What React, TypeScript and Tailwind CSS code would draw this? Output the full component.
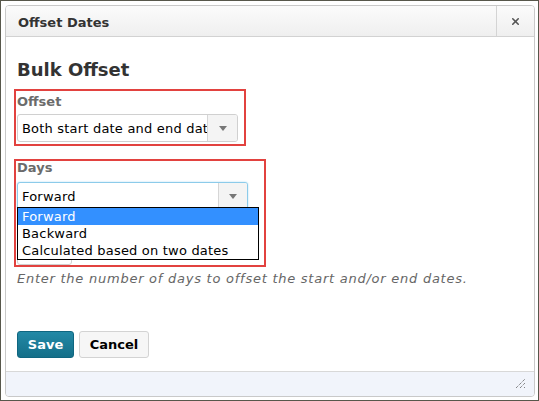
import { X } from 'lucide-react';

const font = { fontFamily: '"DejaVu Sans", Verdana, sans-serif' };

function Caret() {
  return (
    <svg width="8" height="5" viewBox="0 0 8 5" className="block">
      <path d="M0 0 L8 0 L4 5 Z" fill="#777" />
    </svg>
  );
}

function FakeSelect({ value, width, arrowWidth, focused }: { value: string; width: string; arrowWidth: string; focused?: boolean }) {
  return (
    <div
      className={`flex h-[28px] ${width} overflow-hidden rounded-[3px] border bg-white ${
        focused ? 'border-[#8ccbea] shadow-[0_0_2px_#a8daf3]' : 'border-[#d0d0d0]'
      }`}
    >
      <div className="flex-1 overflow-hidden whitespace-nowrap pl-[4px] pt-[1px] text-[13px] leading-[26px] tracking-[0.2px] text-black">
        {value}
      </div>
      <div className={`flex ${arrowWidth} items-center justify-center border-l border-[#d6d6d6] bg-[#f4f4f4]`}>
        <Caret />
      </div>
    </div>
  );
}

export default function App() {
  return (
    <div className="h-[401px] w-[539px] border border-[#57574b] bg-white pb-[3px] pl-[4px] pr-[3px] pt-[4px]" style={font}>
      <div className="flex h-full flex-col overflow-hidden rounded-[4px] border border-[#c9c9c9] bg-white">
        {/* Header */}
        <div className="flex h-[31px] shrink-0 items-stretch border-b border-[#d2d2d2] bg-gradient-to-b from-[#fbfbfb] to-[#efefef]">
          <div className="flex-1 pl-[12px] pt-[2px] text-[13px] font-bold leading-[30px] text-[#333]">Offset Dates</div>
          <div className="flex w-[38px] items-center justify-center border-l border-[#d4d4d4] pt-[1px]">
            <X size={11} strokeWidth={3.5} color="#555" />
          </div>
        </div>

        {/* Body */}
        <div className="flex-1 pl-[11px] pt-[22px]">
          <h2 className="text-[18px] font-bold leading-[22px] text-[#333]">Bulk Offset</h2>

          <div className="-ml-[3px] mt-[8px] h-[57px] w-[232px] border-2 border-[#e2423f] pl-[1px] pt-[3px]">
            <div className="text-[13px] font-bold leading-4 text-[#6b6b6b]">Offset</div>
            <div className="mt-[4px]">
              <FakeSelect value="Both start date and end date" width="w-[221px]" arrowWidth="w-[30px]" />
            </div>
          </div>

          <div className="-ml-[3px] mt-[13px] h-[108px] w-[252px] border-2 border-[#e2423f] pl-[1px]">
            <div className="-mt-[1px] text-[13px] font-bold leading-4 text-[#6b6b6b]">Days</div>
            <div className="relative mt-[6px]">
              <FakeSelect value="Forward" width="w-[231px]" arrowWidth="w-[29px]" focused />
              <div className="absolute left-0 top-[25px] z-10 w-[242px] border border-black bg-white text-[13px] leading-[17px] tracking-[0.2px] text-black">
                <div className="bg-[#3390ff] pl-[4px] text-white">Forward</div>
                <div className="pl-[4px]">Backward</div>
                <div className="pl-[4px]">Calculated based on two dates</div>
              </div>
              <div className="mt-[27px] h-[28px] w-[55px] rounded-[3px] border border-[#d0d0d0] bg-white" />
            </div>
          </div>

          <p className="mt-[4px] text-[13px] italic leading-4 tracking-[0.75px] text-[#666]">
            Enter the number of days to offset the start and/or end dates.
          </p>

          <div className="mt-[44px] flex gap-[5px]">
            <button className="h-[27px] w-[57px] rounded-[3px] border border-[#0f6680] bg-gradient-to-b from-[#2389a6] to-[#146f89] text-[13px] font-bold text-white">
              Save
            </button>
            <button className="h-[27px] w-[70px] rounded-[3px] border border-[#d3d3d3] bg-[#f6f6f6] text-[13px] font-bold text-black">
              Cancel
            </button>
          </div>
        </div>

        {/* Footer */}
        <div className="relative h-[25px] shrink-0 border-t border-[#d8d8d8] bg-[#f1f4fb]">
          <svg width="10" height="10" viewBox="0 0 10 10" className="absolute bottom-[8px] right-[9px]">
            <path d="M1 10 L10 1 M5 10 L10 5 M9 10 L10 9" stroke="#555" strokeWidth="1" strokeDasharray="1 1" />
          </svg>
        </div>
      </div>
    </div>
  );
}
